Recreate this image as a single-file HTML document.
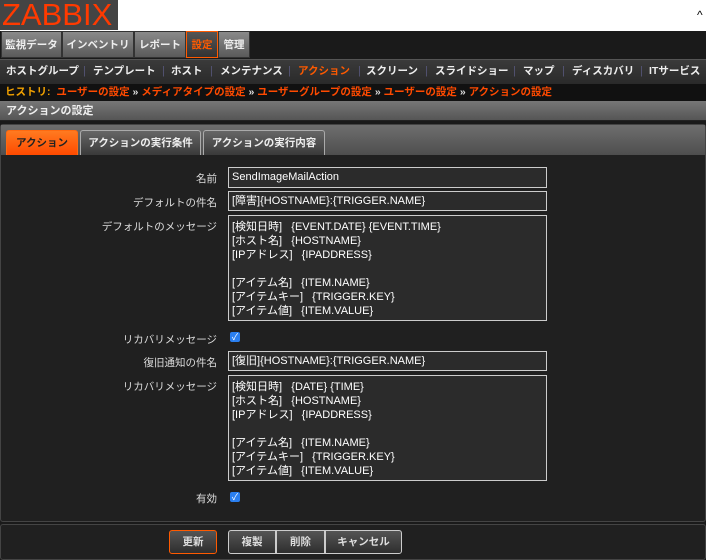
<!DOCTYPE html>
<html><head><meta charset="utf-8"><style>
*{margin:0;padding:0;box-sizing:border-box}
body{width:706px;height:557px;overflow:hidden;background:#1a1a1a;font-family:"Liberation Sans","Noto Sans CJK JP",sans-serif;font-size:11px;color:#fff;position:relative}
.a{position:absolute;white-space:nowrap}
.top{left:0;top:0;width:706px;height:31px;background:#fff}
.logo{left:0;top:0;width:118px;height:30px;background:#444;color:#ff3a00;font-size:31px;line-height:30px;padding-left:2px;overflow:hidden}
.mm{top:31px;height:27px;background:linear-gradient(#8a8a8a,#5a5a5a);color:#eee;font-weight:bold;font-size:10.5px;line-height:27px;text-align:center;border:1px solid #333}
.sub{left:0;top:59px;width:706px;height:25px;background:linear-gradient(#3a3a3a,#2a2a2a);border-top:1px solid #555;overflow:hidden}
.si{top:64px;font-weight:bold;font-size:10.5px;line-height:14px;color:#eee}
.sp{top:64px;color:#557;font-size:11px;line-height:14px}
.hist{left:0;top:84px;width:706px;height:17px;background:#111;font-weight:bold;font-size:10.5px;line-height:17px;padding-left:5px;color:#ff4a00;overflow:hidden}
.title{left:0;top:101px;width:706px;height:20px;background:linear-gradient(#777,#555);border-bottom:1px solid #222;font-weight:bold;font-size:11px;line-height:20px;padding-left:6px;color:#eee}
.panel{left:0;top:124px;width:706px;height:398px;background:#202020;border:1px solid #444;border-radius:3px}
.tabbar{left:1px;top:125px;width:704px;height:30px;background:linear-gradient(#6e6e6e,#4e4e4e)}
.tab{top:130px;height:25px;background:linear-gradient(#666,#3a3a3a);border:1px solid #aaa;border-bottom:none;border-radius:3px 3px 0 0;font-weight:bold;font-size:10.5px;line-height:25px;text-align:center;color:#eee}
.lbl{right:489px;font-size:10.5px;color:#ddd;text-align:right}
.in{left:228px;width:319px;background:#2b2b2b;border:1px solid #ccc;font-size:11px;color:#fff;padding:2px 0 0 3px;line-height:14px;white-space:pre}
.cb{left:230px;width:10px;height:10px;background:#2a7ff0;border-radius:2px;color:#fff;font-size:9px;line-height:10px;text-align:center}
.foot{left:0;top:524px;width:706px;height:36px;background:#202020;border:1px solid #444;border-radius:3px}
.btn{top:530px;height:24px;background:linear-gradient(#555,#2e2e2e);border:1px solid #ccc;font-weight:bold;font-size:10.5px;line-height:22px;text-align:center;color:#ddd;border-radius:3px}
</style></head><body>
<div class="a top"></div>
<div class="a logo">ZABBIX</div>
<div class="a" style="left:697px;top:8px;color:#000;font-size:12px">^</div>
<div class="a" style="left:0;top:31px;width:706px;height:28px;background:#1a1a1a"></div>
<div class="a mm" style="left:1px;width:61px">監視データ</div>
<div class="a mm" style="left:62px;width:72px">インベントリ</div>
<div class="a mm" style="left:134px;width:52px">レポート</div>
<div class="a mm" style="left:186px;width:32px;border:1px solid #ff5a00;color:#ff5a00;background:linear-gradient(#555,#333)">設定</div>
<div class="a mm" style="left:218px;width:32px">管理</div>
<div class="a sub"></div>
<div class="a si" style="left:6px">ホストグループ</div><div class="a sp" style="left:83px">|</div>
<div class="a si" style="left:93px">テンプレート</div><div class="a sp" style="left:162px">|</div>
<div class="a si" style="left:171px">ホスト</div><div class="a sp" style="left:210px">|</div>
<div class="a si" style="left:220px">メンテナンス</div><div class="a sp" style="left:288px">|</div>
<div class="a si" style="left:298px;color:#ff5a00">アクション</div><div class="a sp" style="left:358px">|</div>
<div class="a si" style="left:366px">スクリーン</div><div class="a sp" style="left:425px">|</div>
<div class="a si" style="left:435px">スライドショー</div><div class="a sp" style="left:513px">|</div>
<div class="a si" style="left:523px">マップ</div><div class="a sp" style="left:562px">|</div>
<div class="a si" style="left:572px">ディスカバリ</div><div class="a sp" style="left:640px">|</div>
<div class="a si" style="left:649px">ITサービス</div>
<div class="a hist"><span style="color:#f0a000">ヒストリ:</span>&nbsp; ユーザーの設定 <span style="color:#ddd">»</span> メディアタイプの設定 <span style="color:#ddd">»</span> ユーザーグループの設定 <span style="color:#ddd">»</span> ユーザーの設定 <span style="color:#ddd">»</span> アクションの設定</div>
<div class="a title">アクションの設定</div>
<div class="a panel"></div>
<div class="a tabbar"></div>
<div class="a tab" style="left:6px;width:72px;background:linear-gradient(#ff7a20,#ff4a00);border-color:#ff6a10;color:#222">アクション</div>
<div class="a tab" style="left:80px;width:121px">アクションの実行条件</div>
<div class="a tab" style="left:203px;width:122px">アクションの実行内容</div>
<div class="a lbl" style="top:171px">名前</div>
<div class="a in" style="top:167px;height:21px">SendImageMailAction</div>
<div class="a lbl" style="top:195px">デフォルトの件名</div>
<div class="a in" style="top:191px;height:20px">[障害]{HOSTNAME}:{TRIGGER.NAME}</div>
<div class="a lbl" style="top:219px">デフォルトのメッセージ</div>
<div class="a in" style="top:215px;height:106px;padding-top:4px">[検知日時]   {EVENT.DATE} {EVENT.TIME}
[ホスト名]   {HOSTNAME}
[IPアドレス]   {IPADDRESS}

[アイテム名]   {ITEM.NAME}
[アイテムキー]   {TRIGGER.KEY}
[アイテム値]   {ITEM.VALUE}</div>
<div class="a lbl" style="top:332px">リカバリメッセージ</div>
<div class="a cb" style="top:332px">✓</div>
<div class="a lbl" style="top:355px">復旧通知の件名</div>
<div class="a in" style="top:351px;height:20px">[復旧]{HOSTNAME}:{TRIGGER.NAME}</div>
<div class="a lbl" style="top:379px">リカバリメッセージ</div>
<div class="a in" style="top:375px;height:106px;padding-top:4px">[検知日時]   {DATE} {TIME}
[ホスト名]   {HOSTNAME}
[IPアドレス]   {IPADDRESS}

[アイテム名]   {ITEM.NAME}
[アイテムキー]   {TRIGGER.KEY}
[アイテム値]   {ITEM.VALUE}</div>
<div class="a lbl" style="top:491px">有効</div>
<div class="a cb" style="top:492px">✓</div>
<div class="a foot"></div>
<div class="a btn" style="left:169px;width:48px;border-color:#ff5a00">更新</div>
<div class="a btn" style="left:228px;width:48px;border-radius:3px 0 0 3px">複製</div>
<div class="a btn" style="left:276px;width:49px;border-radius:0">削除</div>
<div class="a btn" style="left:325px;width:77px;border-radius:0 3px 3px 0">キャンセル</div>
</body></html>
